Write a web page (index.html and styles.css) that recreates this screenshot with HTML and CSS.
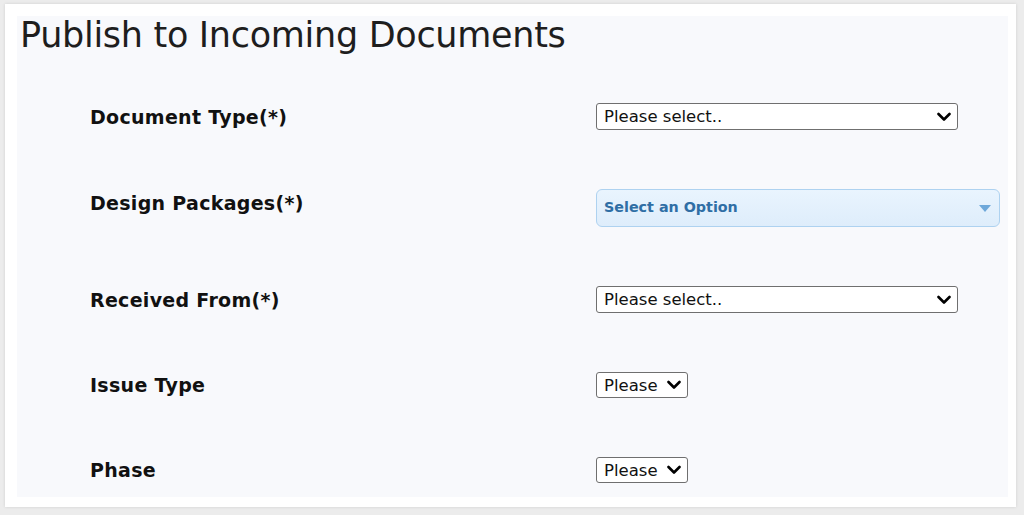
FILE: index.html
```html
<!DOCTYPE html>
<html>
<head>
<meta charset="utf-8">
<link rel="stylesheet" href="styles.css">
</head>
<body>
<div class="card">
  <div class="panel">
    <h1 class="title">Publish to Incoming Documents</h1>
    <div class="form">
      <div class="row">
        <div class="label">Document Type(*)</div>
        <div class="select wide"><span class="val">Please select..</span>
          <svg class="chev" viewBox="0 0 14 10" width="14" height="10"><path d="M1.5 2 L7 7.5 L12.5 2" fill="none" stroke="#000" stroke-width="2.6" stroke-linecap="round" stroke-linejoin="round"/></svg>
        </div>
      </div>
      <div class="row top">
        <div class="label shift">Design Packages(*)</div>
        <div class="select2"><span class="val2">Select an Option</span>
          <svg class="tri" viewBox="0 0 12 7" width="12" height="7"><path d="M0 0 H12 L6 7 Z" fill="#6ea8da"/></svg>
        </div>
      </div>
      <div class="row">
        <div class="label">Received From(*)</div>
        <div class="select wide"><span class="val">Please select..</span>
          <svg class="chev" viewBox="0 0 14 10" width="14" height="10"><path d="M1.5 2 L7 7.5 L12.5 2" fill="none" stroke="#000" stroke-width="2.6" stroke-linecap="round" stroke-linejoin="round"/></svg>
        </div>
      </div>
      <div class="row">
        <div class="label">Issue Type</div>
        <div class="select small"><span class="val">Please</span>
          <svg class="chev" viewBox="0 0 14 10" width="14" height="10"><path d="M1.5 2 L7 7.5 L12.5 2" fill="none" stroke="#000" stroke-width="2.6" stroke-linecap="round" stroke-linejoin="round"/></svg>
        </div>
      </div>
      <div class="row">
        <div class="label">Phase</div>
        <div class="select small"><span class="val">Please</span>
          <svg class="chev" viewBox="0 0 14 10" width="14" height="10"><path d="M1.5 2 L7 7.5 L12.5 2" fill="none" stroke="#000" stroke-width="2.6" stroke-linecap="round" stroke-linejoin="round"/></svg>
        </div>
      </div>
    </div>
  </div>
</div>
</body>
</html>
```
FILE: styles.css
```css
html, body {
  margin: 0;
  padding: 0;
}
body {
  background: #ececec;
  width: 1024px;
  height: 515px;
  overflow: hidden;
  padding-top: 4px;
  padding-left: 5px;
  box-sizing: border-box;
}
.card {
  width: 1011px;
  height: 503px;
  background: #fff;
  box-sizing: border-box;
  padding: 12px 8px 10px 12px;
  box-shadow: 0 0 3px rgba(0,0,0,0.12);
}
.panel {
  background: #f8f9fc;
  height: 100%;
  box-sizing: border-box;
}
.title {
  margin: 0;
  padding-left: 3px;
  font-family: "DejaVu Sans", sans-serif;
  font-weight: normal;
  font-size: 35px;
  line-height: 38px;
  color: #1e1e1e;
  letter-spacing: -0.3px;
}
.form {
  display: flex;
  flex-direction: column;
  gap: 59px;
  padding-top: 49px;
  padding-left: 73px;
}
.row {
  display: flex;
  align-items: center;
}
.row.top {
  align-items: flex-start;
}
.label {
  width: 506px;
  font-family: "DejaVu Sans", sans-serif;
  font-weight: bold;
  font-size: 19px;
  letter-spacing: 0.3px;
  line-height: 22px;
  color: #111;
}
.label.shift {
  padding-top: 3px;
}
.select {
  height: 27px;
  box-sizing: border-box;
  border: 1px solid #6f6f6f;
  border-radius: 3px;
  background: #fff;
  display: flex;
  align-items: center;
  justify-content: space-between;
  padding: 0 6px 0 7px;
  font-family: "DejaVu Sans", sans-serif;
  font-size: 16.5px;
  color: #111;
}
.select.wide {
  width: 362px;
}
.select.small {
  width: 92px;
  height: 26px;
}
.chev {
  display: block;
}
.select2 {
  width: 404px;
  height: 38px;
  box-sizing: border-box;
  border: 1px solid #aed2f0;
  border-radius: 6px;
  background: linear-gradient(#e9f4fe, #deedfb);
  display: flex;
  align-items: center;
  justify-content: space-between;
  padding: 0 8px 3px 7px;
  font-family: "DejaVu Sans", sans-serif;
  font-weight: bold;
  font-size: 14.3px;
  color: #2f6ea5;
}
.tri {
  display: block;
  margin-top: 4px;
}
```
